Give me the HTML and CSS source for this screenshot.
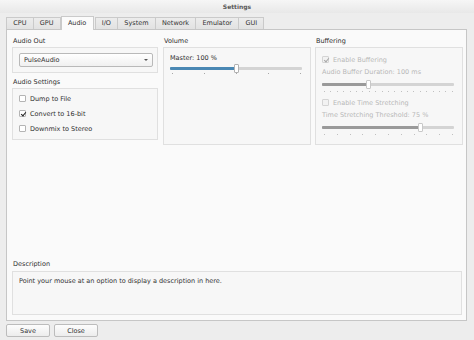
FILE: index.html
```html
<!DOCTYPE html>
<html lang="en">
<head>
    <meta charset="UTF-8">
    <title>Settings</title>
    <link rel="stylesheet" href="styles.css">
</head>
<body>
    <div class="window">
        <div class="titlebar">Settings</div>

        <div class="tabs">
            <span class="tab">CPU</span>
            <span class="tab">GPU</span>
            <span class="tab active">Audio</span>
            <span class="tab">I/O</span>
            <span class="tab">System</span>
            <span class="tab">Network</span>
            <span class="tab">Emulator</span>
            <span class="tab">GUI</span>
        </div>

        <div class="pane">
            <div class="columns">
                <div class="col">
                    <div class="group-title">Audio Out</div>
                    <div class="group out-group">
                        <div class="combo">PulseAudio<span class="arrow"></span></div>
                    </div>
                    <div class="group-title">Audio Settings</div>
                    <div class="group checks">
                        <div class="check"><span class="box"></span>Dump to File</div>
                        <div class="check"><span class="box checked"></span>Convert to 16-bit</div>
                        <div class="check"><span class="box"></span>Downmix to Stereo</div>
                    </div>
                </div>

                <div class="col">
                    <div class="group-title">Volume</div>
                    <div class="group tall">
                        <div class="field">Master: 100 %</div>
                        <div class="slider">
                            <div class="groove"><div class="fill" style="width: 50%"></div></div>
                            <div class="handle" style="left: 50%"></div>
                        </div>
                        <div class="ticks">
                            <i></i><i></i><i></i><i></i><i></i>
                        </div>
                    </div>
                </div>

                <div class="col">
                    <div class="group-title">Buffering</div>
                    <div class="group tall disabled">
                        <div class="check"><span class="box checked"></span>Enable Buffering</div>
                        <div class="field">Audio Buffer Duration: 100 ms</div>
                        <div class="slider">
                            <div class="groove"><div class="fill" style="width: 35%"></div></div>
                            <div class="handle" style="left: 35%"></div>
                        </div>
                        <div class="ticks" id="bufferTicks"></div>
                        <div class="check"><span class="box"></span>Enable Time Stretching</div>
                        <div class="field">Time Stretching Threshold: 75 %</div>
                        <div class="slider">
                            <div class="groove"><div class="fill" style="width: 74%"></div></div>
                            <div class="handle" style="left: 74%"></div>
                        </div>
                        <div class="ticks" id="stretchTicks"></div>
                    </div>
                </div>
            </div>

            <div class="description">
                <div class="group-title">Description</div>
                <div class="group desc-box"><span class="desc-text">Point your mouse at an option to display a description in here.</span></div>
            </div>
        </div>

        <div class="buttons">
            <button class="btn">Save</button>
            <button class="btn">Close</button>
        </div>
    </div>

    <script>
        // tick marks under the disabled sliders
        function fillTicks(id, count) {
            const row = document.getElementById(id);
            for (let i = 0; i < count; i++) {
                row.appendChild(document.createElement('i'));
            }
        }
        fillTicks('bufferTicks', 21);
        fillTicks('stretchTicks', 11);
    </script>
</body>
</html>
```

FILE: styles.css
```css
body {
    margin: 0;
    font-family: "DejaVu Sans", "Liberation Sans", sans-serif;
    font-size: 6.5px;
    color: #2f2f2f;
    background-color: #ededed;
}
.window {
    width: 474px;
    height: 340px;
    display: flex;
    flex-direction: column;
    overflow: hidden;
}
.titlebar {
    height: 13px;
    line-height: 13px;
    text-align: center;
    font-size: 6px;
    font-weight: bold;
    color: #5a5a5a;
    background: linear-gradient(#f6f6f6, #e8e8e8);
}
.tabs {
    display: flex;
    align-items: flex-end;
    height: 13px;
    margin: 3px 0 0 6px;
}
.tab {
    height: 11px;
    line-height: 11px;
    padding: 0 6.2px;
    border: 1px solid #cacaca;
    border-bottom: none;
    background: linear-gradient(#ececec, #e2e2e2);
    color: #333;
    margin-right: -1px;
}
.tab.active {
    height: 13px;
    line-height: 12px;
    background: #fbfbfb;
    margin: 0 1px -1px 1px;
    position: relative;
    z-index: 1;
}
.pane {
    margin: 0 7px 0 6px;
    height: 280px;
    padding: 7px 3px 5px 5px;
    border: 1px solid #c6c6c6;
    background-color: #fafafa;
    display: flex;
    flex-direction: column;
    justify-content: space-between;
}
.columns {
    display: flex;
    gap: 5px;
}
.col {
    display: flex;
    flex-direction: column;
}
.col:nth-child(1) {
    width: 146px;
}
.col:nth-child(2) {
    width: 148px;
    margin-right: -1px;
}
.col:nth-child(3) {
    width: 148px;
}
.group-title {
    height: 9px;
    line-height: 9px;
    padding-left: 1px;
    margin-bottom: 1px;
    color: #2f2f2f;
}
.group {
    border: 1px solid #e0e0e0;
    background-color: #f7f7f7;
}
.out-group {
    padding: 5px 4px 5px 6px;
    margin-bottom: 5px;
}
.combo {
    height: 12px;
    line-height: 12px;
    padding: 0 4px;
    border: 1px solid #b9b9b9;
    border-radius: 2px;
    background: linear-gradient(#ffffff, #f0f0f0);
    position: relative;
}
.arrow {
    position: absolute;
    right: 4px;
    top: 5px;
    border-left: 2px solid transparent;
    border-right: 2px solid transparent;
    border-top: 2px solid #555;
}
.checks {
    height: 48px;
    padding: 2px 6px 0 6px;
}
.check {
    display: flex;
    align-items: center;
    height: 15px;
}
.box {
    width: 7px;
    height: 7px;
    border: 1px solid #b4b4b4;
    border-radius: 1px;
    background: #fff;
    margin-right: 4px;
    position: relative;
    box-sizing: border-box;
}
.box.checked::after {
    content: "";
    position: absolute;
    left: 2px;
    top: 0;
    width: 2px;
    height: 4px;
    border: solid #222;
    border-width: 0 1px 1px 0;
    transform: rotate(40deg);
}
.tall {
    height: 91px;
    padding: 5px 7px 0 6px;
}
.field {
    height: 10px;
    line-height: 10px;
}
.slider {
    position: relative;
    height: 10px;
    margin-right: 1px;
}
.groove {
    position: absolute;
    left: 0;
    right: 0;
    top: 4px;
    height: 3px;
    border-radius: 1px;
    background: #d4d4d4;
}
.fill {
    height: 100%;
    border-radius: 1px;
    background: #4a88b4;
}
.handle {
    position: absolute;
    top: 1px;
    width: 5px;
    height: 9px;
    margin-left: -2px;
    border: 1px solid #b2b2b2;
    border-radius: 1px;
    background: #fff;
    box-sizing: border-box;
}
.ticks {
    display: flex;
    justify-content: space-between;
    padding: 0 2px;
    height: 4px;
}
.ticks i {
    width: 1px;
    height: 1px;
    background: #a8a8a8;
}
.disabled {
    color: #b8b8b8;
}
.disabled .check {
    height: 13px;
}
.disabled .field {
    height: 13px;
    line-height: 13px;
}
.disabled .ticks {
    height: 7px;
    padding-top: 2px;
    box-sizing: border-box;
}
.disabled .box {
    border-color: #d4d4d4;
    background: #f2f2f2;
}
.disabled .box.checked::after {
    border-color: #a8a8a8;
}
.disabled .fill {
    background: #9a9a9a;
}
.disabled .handle {
    border-color: #c8c8c8;
}
.disabled .ticks i {
    background: #c0c0c0;
}
.description .group-title {
    margin-bottom: 2px;
}
.desc-box {
    height: 32px;
    padding: 5px 6px;
    margin-right: 1px;
}
.desc-text {
    color: #333333;
}
.buttons {
    display: flex;
    gap: 4px;
    padding: 3px 6px;
}
.btn {
    width: 44px;
    height: 13px;
    padding: 0;
    font-family: inherit;
    font-size: 6.5px;
    color: #333;
    border: 1px solid #bcbcbc;
    border-radius: 2px;
    background: linear-gradient(#fdfdfd, #ececec);
}
```
